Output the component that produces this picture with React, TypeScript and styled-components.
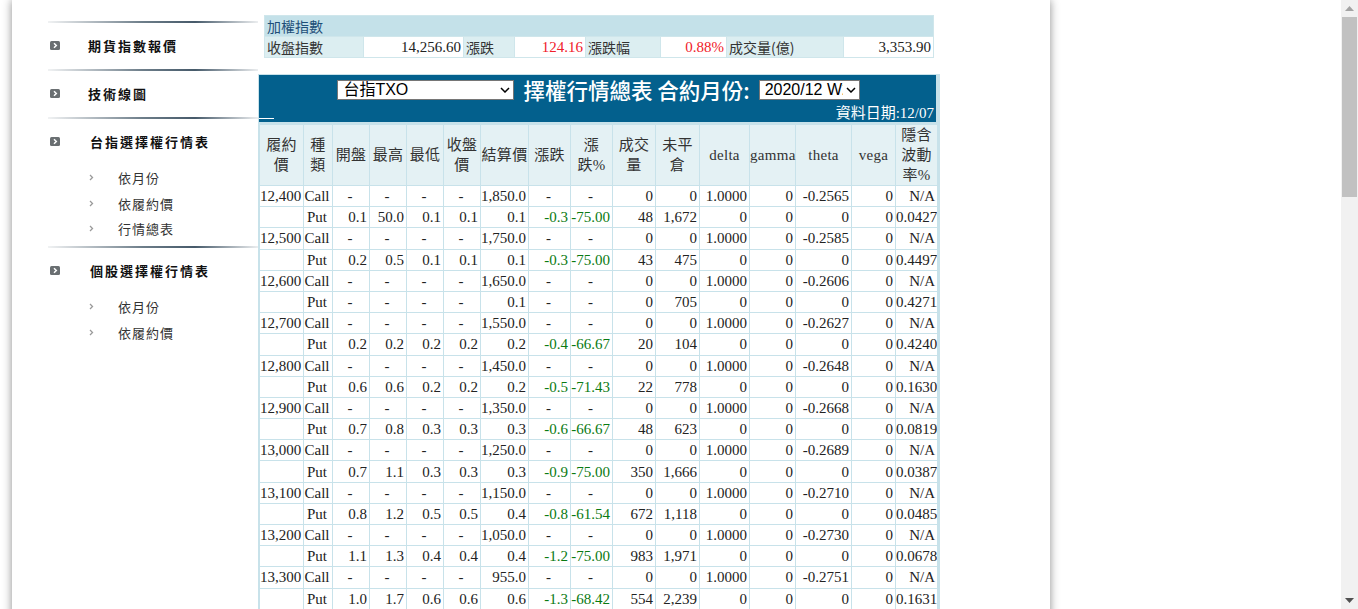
import React from "react";
import styled, { createGlobalStyle } from "styled-components";

const GlobalStyle = createGlobalStyle`
  html, body {
    margin: 0;
    padding: 0;
    background: #ffffff;
    overflow: hidden;
  }
  body {
    font-family: "Liberation Serif", "Noto Sans CJK TC", serif;
    color: #222;
  }
`;

const CJK = `"Noto Sans CJK TC", "Liberation Sans", sans-serif`;

const Page = styled.div`
  display: flex;
  align-items: flex-start;
  margin-left: 12px;
  width: 1038px;
  min-height: 700px;
  background: #fff;
  box-shadow: 0 0 9px rgba(0, 0, 0, 0.45);
`;

const Sidebar = styled.nav`
  width: 210px;
  padding: 21px 0 0 36px;
  flex: none;
`;

const NavRule = styled.div`
  height: 2px;
  background: linear-gradient(
    90deg,
    rgba(70, 90, 105, 0.08) 0%,
    rgba(60, 82, 98, 0.75) 45%,
    rgba(50, 72, 90, 0.9) 70%,
    rgba(70, 90, 105, 0.1) 100%
  );
`;

const NavHeading = styled.div<{ $indent: number }>`
  display: flex;
  align-items: center;
  height: 46px;
  padding-left: 2px;
  padding-bottom: 2px;
  box-sizing: border-box;
  font-family: ${CJK};
  font-size: 13px;
  font-weight: 700;
  letter-spacing: 2px;
  color: #111;

  span {
    margin-left: ${(p) => p.$indent}px;
  }
`;

const SubList = styled.ul`
  list-style: none;
  margin: 0;
  padding: 0 0 4.5px 0;
`;

const SubItem = styled.li`
  display: flex;
  align-items: center;
  height: 25.5px;
  padding-left: 41px;
  font-family: ${CJK};
  font-size: 13px;
  letter-spacing: 1px;
  color: #333;

  svg {
    margin-right: 24px;
  }
`;

const Main = styled.main`
  width: 682px;
  padding-top: 15px;
  flex: none;
`;

const IndexTable = styled.table`
  margin-left: 6px;
  width: 669px;
  border-collapse: collapse;
  table-layout: fixed;
  margin-bottom: 16px;

  td {
    height: 20px;
    padding: 0 2px;
    border: 1px solid #cfe6eb;
    font-size: 14px;
    line-height: 19px;
    white-space: nowrap;
    overflow: hidden;
  }
`;

const IndexHead = styled.td`
  background: #c4e1e9;
  font-family: ${CJK};
  color: #1d4e78;
`;

const IndexLabel = styled.td`
  background: #dceef1;
  font-family: ${CJK};
  color: #333;
`;

const IndexValue = styled.td<{ $up?: boolean }>`
  background: #fff;
  text-align: right;
  font-family: "Liberation Serif", serif;
  && {
    font-size: 15px;
  }
  color: ${(p) => (p.$up ? "#f0202a" : "#222")};
`;

const QuoteBox = styled.section`
  border: 1px solid #c8e2ea;
  border-right-width: 4px;
  border-bottom: none;
  width: 677px;
`;

const TitleBar = styled.div`
  background: #03608d;
  padding-top: 5px;
  height: 42px;
  color: #fff;
  border-bottom: 2px solid #c8e2ea;
`;

const TitleRow = styled.div`
  display: flex;
  justify-content: center;
  align-items: center;
  gap: 9px;
  height: 20px;
  padding-left: 2px;
`;

const PickerWrap = styled.label<{ $w: number }>`
  position: relative;
  display: block;
  width: ${(p) => p.$w}px;
  height: 20px;

  svg {
    position: absolute;
    right: 4px;
    top: 7px;
    pointer-events: none;
  }
`;

const Picker = styled.select`
  appearance: none;
  -webkit-appearance: none;
  display: block;
  width: 100%;
  height: 20px;
  margin: 0;
  padding: 0 16px 0 5px;
  border: 1px solid #767676;
  border-radius: 0;
  background: #fff;
  color: #000;
  font-family: "Liberation Sans", "Noto Sans CJK TC", sans-serif;
  font-size: 16px;
  line-height: 18px;
`;

const Title = styled.h1`
  margin: 0;
  font-family: ${CJK};
  font-size: 21.5px;
  font-weight: 500;
  line-height: 20px;
  color: #fff;
  white-space: nowrap;
`;

const DateRow = styled.div`
  display: flex;
  justify-content: space-between;
  align-items: flex-end;
  height: 18px;
  margin-top: 4px;
`;

const DateMark = styled.i`
  display: block;
  width: 15px;
  height: 1px;
  margin-bottom: 3px;
  background: #fff;
`;

const DateText = styled.span`
  font-family: "Liberation Serif", "Noto Sans CJK TC", serif;
  font-size: 15px;
  line-height: 18px;
  padding-right: 2px;
  color: #fff;
`;

const QuoteTable = styled.table`
  width: 677px;
  border-collapse: collapse;
  table-layout: fixed;
`;

const HeadCell = styled.th`
  height: 57px;
  padding: 0;
  border: 1px solid #c8e2ea;
  background: #e4f1f4;
  font-family: "Liberation Serif", "Noto Sans CJK TC", serif;
  font-size: 15px;
  font-weight: 400;
  line-height: 20px;
  letter-spacing: 0.3px;
  color: #333;
  text-align: center;
  vertical-align: middle;
`;

const Cell = styled.td<{ $align: "left" | "center" | "right"; $tone?: "down" }>`
  height: 20.2px;
  padding: 0 2px 0 0;
  border: 1px solid #c8e2ea;
  background: #fff;
  font-size: 15px;
  line-height: 20px;
  white-space: nowrap;
  overflow: hidden;
  text-align: ${(p) => p.$align};
  color: ${(p) => (p.$tone === "down" ? "#0a7a12" : "#222")};
`;

const ScrollTrack = styled.div`
  position: fixed;
  top: 0;
  right: 0;
  width: 17px;
  height: 100vh;
  background: #f1f1f1;
  display: flex;
  flex-direction: column;
  align-items: center;
`;

const ScrollArrow = styled.div`
  height: 17px;
  display: flex;
  align-items: center;
  justify-content: center;
`;

const ScrollThumb = styled.div`
  width: 15px;
  height: 180px;
  background: #c1c1c1;
`;

const ScrollSpacer = styled.div`
  flex: 1;
`;

const NavIcon = () => (
  <svg width="10" height="9" viewBox="0 0 10 9">
    <rect x="0" y="0" width="10" height="9" rx="1.5" fill="#6a6f72" />
    <path d="M4 2.3 L6.3 4.5 L4 6.7" fill="none" stroke="#fff" strokeWidth="1.5" />
  </svg>
);

const SubChevron = () => (
  <svg width="5" height="7" viewBox="0 0 5 7">
    <path d="M1 1 L3.5 3.5 L1 6" fill="none" stroke="#9a9a9a" strokeWidth="1.3" />
  </svg>
);

const SelectChevron = () => (
  <svg width="10" height="6" viewBox="0 0 10 6">
    <path d="M1 1 L5 5 L9 1" fill="none" stroke="#000" strokeWidth="1.5" />
  </svg>
);

type Row = string[];

const call = (strike: string, settle: string, theta: string): Row => [
  strike, "Call", "-", "-", "-", "-", settle, "-", "-", "0", "0", "1.0000", "0", theta, "0", "N/A",
];

const put = (o: string, h: string, l: string, c: string, s: string, chg: string, pct: string, vol: string, oi: string, iv: string): Row => [
  "", "Put", o, h, l, c, s, chg, pct, vol, oi, "0", "0", "0", "0", iv,
];

const rows: Row[] = [
  call("12,400", "1,850.0", "-0.2565"),
  put("0.1", "50.0", "0.1", "0.1", "0.1", "-0.3", "-75.00", "48", "1,672", "0.0427"),
  call("12,500", "1,750.0", "-0.2585"),
  put("0.2", "0.5", "0.1", "0.1", "0.1", "-0.3", "-75.00", "43", "475", "0.4497"),
  call("12,600", "1,650.0", "-0.2606"),
  put("-", "-", "-", "-", "0.1", "-", "-", "0", "705", "0.4271"),
  call("12,700", "1,550.0", "-0.2627"),
  put("0.2", "0.2", "0.2", "0.2", "0.2", "-0.4", "-66.67", "20", "104", "0.4240"),
  call("12,800", "1,450.0", "-0.2648"),
  put("0.6", "0.6", "0.2", "0.2", "0.2", "-0.5", "-71.43", "22", "778", "0.1630"),
  call("12,900", "1,350.0", "-0.2668"),
  put("0.7", "0.8", "0.3", "0.3", "0.3", "-0.6", "-66.67", "48", "623", "0.0819"),
  call("13,000", "1,250.0", "-0.2689"),
  put("0.7", "1.1", "0.3", "0.3", "0.3", "-0.9", "-75.00", "350", "1,666", "0.0387"),
  call("13,100", "1,150.0", "-0.2710"),
  put("0.8", "1.2", "0.5", "0.5", "0.4", "-0.8", "-61.54", "672", "1,118", "0.0485"),
  call("13,200", "1,050.0", "-0.2730"),
  put("1.1", "1.3", "0.4", "0.4", "0.4", "-1.2", "-75.00", "983", "1,971", "0.0678"),
  call("13,300", "955.0", "-0.2751"),
  put("1.0", "1.7", "0.6", "0.6", "0.6", "-1.3", "-68.42", "554", "2,239", "0.1631"),
];

const widths = [44, 29, 37, 37, 37, 37, 48, 42, 42, 43, 44, 50, 46, 56, 44, 42];

const heads: React.ReactNode[] = [
  <>履約<br />價</>,
  <>種<br />類</>,
  "開盤",
  "最高",
  "最低",
  <>收盤<br />價</>,
  "結算價",
  "漲跌",
  <>漲<br />跌%</>,
  <>成交<br />量</>,
  <>未平<br />倉</>,
  "delta",
  "gamma",
  "theta",
  "vega",
  <>隱含<br />波動<br />率%</>,
];

const nav = [
  { title: "期貨指數報價", indent: 28, subs: [] as string[] },
  { title: "技術線圖", indent: 28, subs: [] as string[] },
  { title: "台指選擇權行情表", indent: 30, subs: ["依月份", "依履約價", "行情總表"] },
  { title: "個股選擇權行情表", indent: 30, subs: ["依月份", "依履約價"] },
];

export default function App() {
  return (
    <>
      <GlobalStyle />
      <Page>
        <Sidebar>
          {nav.map((n) => (
            <div key={n.title}>
              <NavRule />
              <NavHeading $indent={n.indent}>
                <NavIcon />
                <span>{n.title}</span>
              </NavHeading>
              {n.subs.length > 0 && (
                <SubList>
                  {n.subs.map((s) => (
                    <SubItem key={s}>
                      <SubChevron />
                      {s}
                    </SubItem>
                  ))}
                </SubList>
              )}
            </div>
          ))}
        </Sidebar>

        <Main>
          <IndexTable>
            <colgroup>
              {[99, 100, 51, 71, 75, 66, 117, 90].map((w, i) => (
                <col key={i} style={{ width: w }} />
              ))}
            </colgroup>
            <tbody>
              <tr>
                <IndexHead colSpan={8}>加權指數</IndexHead>
              </tr>
              <tr>
                <IndexLabel>收盤指數</IndexLabel>
                <IndexValue>14,256.60</IndexValue>
                <IndexLabel>漲跌</IndexLabel>
                <IndexValue $up>124.16</IndexValue>
                <IndexLabel>漲跌幅</IndexLabel>
                <IndexValue $up>0.88%</IndexValue>
                <IndexLabel>成交量(億)</IndexLabel>
                <IndexValue>3,353.90</IndexValue>
              </tr>
            </tbody>
          </IndexTable>

          <QuoteBox>
            <TitleBar>
              <TitleRow>
                <PickerWrap $w={177}>
                  <Picker defaultValue="TXO">
                    <option value="TXO">台指TXO</option>
                  </Picker>
                  <SelectChevron />
                </PickerWrap>
                <Title>擇權行情總表 合約月份:</Title>
                <PickerWrap $w={101}>
                  <Picker defaultValue="W2">
                    <option value="W2">2020/12 W2</option>
                  </Picker>
                  <SelectChevron />
                </PickerWrap>
              </TitleRow>
              <DateRow>
                <DateMark />
                <DateText>資料日期:12/07</DateText>
              </DateRow>
            </TitleBar>
            <QuoteTable>
              <colgroup>
                {widths.map((w, i) => (
                  <col key={i} style={{ width: w }} />
                ))}
              </colgroup>
              <thead>
                <tr>
                  {heads.map((h, i) => (
                    <HeadCell key={i}>{h}</HeadCell>
                  ))}
                </tr>
              </thead>
              <tbody>
                {rows.map((r, ri) => (
                  <tr key={ri}>
                    {r.map((v, ci) => {
                      const align = ci === 1 || v === "-" ? "center" : "right";
                      const tone = (ci === 7 || ci === 8) && v.startsWith("-") && v !== "-" ? "down" : undefined;
                      return (
                        <Cell key={ci} $align={align} $tone={tone}>
                          {v}
                        </Cell>
                      );
                    })}
                  </tr>
                ))}
              </tbody>
            </QuoteTable>
          </QuoteBox>
        </Main>
      </Page>

      <ScrollTrack aria-hidden>
        <ScrollArrow>
          <svg width="9" height="5" viewBox="0 0 9 5">
            <path d="M0 5 L4.5 0 L9 5 Z" fill="#a3a3a3" />
          </svg>
        </ScrollArrow>
        <ScrollThumb />
        <ScrollSpacer />
        <ScrollArrow>
          <svg width="9" height="5" viewBox="0 0 9 5">
            <path d="M0 0 L4.5 5 L9 0 Z" fill="#505050" />
          </svg>
        </ScrollArrow>
      </ScrollTrack>
    </>
  );
}
